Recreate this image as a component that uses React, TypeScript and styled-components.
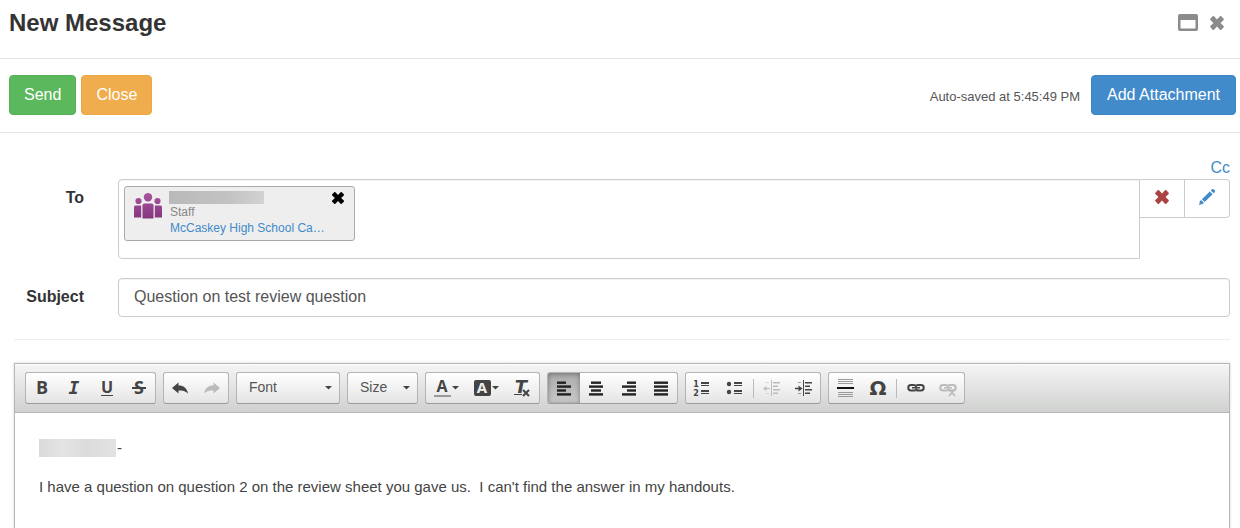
import React from "react";
import styled, { createGlobalStyle, css } from "styled-components";

const GlobalStyle = createGlobalStyle`
  *, *::before, *::after { box-sizing: border-box; }
  body {
    margin: 0;
    background: #fff;
    color: #333;
    font: 16px/20px "Liberation Sans", Arial, sans-serif;
  }
  button, input, select { font: inherit; color: inherit; margin: 0; }
  button { cursor: pointer; }
  svg { display: block; flex: none; overflow: visible; }
`;

const Page = styled.main`
  display: flex;
  flex-direction: column;
  min-height: 100vh;
`;

const Header = styled.header`
  display: flex;
  align-items: center;
  justify-content: space-between;
  height: 59px;
  padding: 0 15px 12px 9px;
  border-bottom: 1px solid #e5e5e5;
`;

const Title = styled.h1`
  margin: 0;
  font-size: 24px;
  line-height: 28px;
  font-weight: bold;
`;

const WindowControls = styled.div`
  display: flex;
  align-items: center;
  gap: 11px;
  color: #8b8b8b;
`;

const IconButton = styled.button`
  display: flex;
  align-items: center;
  justify-content: center;
  padding: 0;
  border: 0;
  background: none;
`;

const ActionBar = styled.div`
  display: flex;
  align-items: center;
  gap: 5px;
  height: 74px;
  padding: 0 4px 2px 9px;
  border-bottom: 1px solid #e5e5e5;
`;

const tones = {
  success: ["#5cb85c", "#55b055"],
  warning: ["#f0ad4e", "#eda747"],
  primary: ["#428bca", "#3d86c6"],
};

const ActionButton = styled.button<{ $tone: keyof typeof tones }>`
  height: 40px;
  padding: 0 ${(p) => (p.$tone === "primary" ? 15 : 14)}px;
  border: 1px solid ${(p) => tones[p.$tone][1]};
  border-radius: 4px;
  background: ${(p) => tones[p.$tone][0]};
  color: #fff;
`;

const SaveStatus = styled.span`
  margin: 4px 6px 0 auto;
  font-size: 13px;
  color: #555;
`;

const Form = styled.form`
  display: flex;
  flex-direction: column;
  flex: 1;
  padding: 25px 10px 0 14px;
`;

const CcLink = styled.a`
  align-self: flex-end;
  height: 21px;
  color: #428bca;
  text-decoration: none;
`;

const Field = styled.div`
  display: flex;
  align-items: flex-start;
  gap: 34px;
  margin-bottom: 19px;
`;

const Label = styled.label`
  flex: none;
  width: 70px;
  padding-top: 9px;
  text-align: right;
  font-weight: bold;
`;

const InputGroup = styled.div`
  display: flex;
  align-items: flex-start;
  flex: 1;
  min-width: 0;
`;

const Recipients = styled.div`
  display: flex;
  align-items: flex-start;
  flex: 1;
  min-width: 0;
  height: 80px;
  padding: 6px 5px;
  border: 1px solid #ccc;
  border-radius: 4px 0 0 4px;
  box-shadow: inset 0 1px 1px rgba(0, 0, 0, 0.05);
`;

const AddonButton = styled(IconButton)<{ $color: string }>`
  width: 45px;
  height: 39px;
  padding-bottom: 3px;
  border: 1px solid #ccc;
  border-left: 0;
  color: ${(p) => p.$color};

  &:last-child { border-radius: 0 4px 4px 0; }
`;

const Chip = styled.div`
  display: flex;
  align-items: flex-start;
  width: 231px;
  height: 55px;
  padding: 4px 9px;
  border: 1px solid #aaa;
  border-radius: 3px;
  background: #eee;
  font-size: 12px;
  line-height: 16px;
`;

const ChipRemove = styled(IconButton)`
  color: #000;
`;

const ChipText = styled.div`
  flex: 1;
  min-width: 0;
  margin-left: 7px;
`;

const ChipName = styled.div`
  width: 95px;
  height: 13px;
  background: linear-gradient(90deg, #b9b9b9, #c0c0c0 45%, #c3c3c3 65%, #d2d2d2);
`;

const ChipRole = styled.div`
  padding-left: 1px;
  color: #888;
`;

const ChipSchool = styled.a`
  display: block;
  padding-left: 1px;
  color: #428bca;
  text-decoration: none;
  white-space: nowrap;
`;

const SubjectInput = styled.input`
  flex: 1;
  min-width: 0;
  height: 39px;
  padding: 0 15px 2px;
  border: 1px solid #ccc;
  border-radius: 4px;
  box-shadow: inset 0 1px 1px rgba(0, 0, 0, 0.05);
  color: #555;
  outline: 0;
`;

const Divider = styled.hr`
  width: 100%;
  margin: 3px 0 23px;
  border: 0;
  border-top: 1px solid #eee;
`;

const Editor = styled.section`
  display: flex;
  flex-direction: column;
  flex: 1;
  border: 1px solid #b6b6b6;
  border-bottom: 0;
  box-shadow: 0 0 3px rgba(0, 0, 0, 0.15);
`;

const Toolbar = styled.div`
  display: flex;
  flex-wrap: wrap;
  gap: 7px;
  padding: 8px 10px;
  border-bottom: 1px solid #b6b6b6;
  background: linear-gradient(#f5f5f5, #cfd1cf);
  box-shadow: inset 0 1px 0 #fff;
`;

const Group = styled.div<{ $width: number }>`
  display: flex;
  align-items: stretch;
  position: relative;
  width: ${(p) => p.$width}px;
  height: 32px;
  border: 1px solid #b4b4b4;
  border-bottom-color: #999;
  border-radius: 3px;
  background: linear-gradient(#fff, #e4e4e4);
`;

const Tool = styled.button<{ $active?: boolean; $faded?: boolean }>`
  display: flex;
  align-items: center;
  justify-content: center;
  flex: 1 1 auto;
  padding: 0;
  border: 0;
  background: none;
  color: #444;
  ${(p) => p.$faded && css`color: #bbb;`}
  ${(p) =>
    p.$active &&
    css`
      border-radius: 2px 0 0 2px;
      background: linear-gradient(#aaa, #cacaca);
      box-shadow: inset 0 1px 5px rgba(0, 0, 0, 0.35);
    `}
`;

const Separator = styled.span`
  flex: none;
  width: 1px;
  margin: 6px 3px 5px;
  background: #bbb;
`;

const Combo = styled.select`
  appearance: none;
  flex: 1;
  min-width: 0;
  padding: 0 20px 2px 12px;
  border: 0;
  background: none;
  color: #555;
  font-size: 14px;
  outline: 0;
`;

const ComboCaret = styled.svg`
  position: absolute;
  right: 7px;
  top: 13px;
  pointer-events: none;
`;

const MessageBody = styled.div`
  flex: 1;
  padding: 25px 24px;
  background: #fff;
  font-size: 15px;
  color: #444;
  outline: 0;
`;

const Paragraph = styled.p`
  display: flex;
  align-items: center;
  margin: 0 0 19px;
  white-space: pre-wrap;
`;

const HiddenName = styled.span`
  width: 77px;
  height: 18px;
  margin-right: 1px;
  background: linear-gradient(90deg, #dadada, #e4e4e4 30%, #dcdcdc 60%, #e2e2e2);
`;

const RemoveIcon = ({ size }: { size: number }) => (
  <svg width={size} height={size} viewBox="0 0 14 14" aria-hidden="true">
    <path
      d="M1.2 3.2 3.2 1.2 Q3.8.7 4.4 1.2L7 3.9 9.6 1.2Q10.2.7 10.8 1.2L12.8 3.2Q13.3 3.8 12.8 4.4L10.1 7 12.8 9.6Q13.3 10.2 12.8 10.8L10.8 12.8Q10.2 13.3 9.6 12.8L7 10.1 4.4 12.8Q3.8 13.3 3.2 12.8L1.2 10.8Q.7 10.2 1.2 9.6L3.9 7 1.2 4.4Q.7 3.8 1.2 3.2Z"
      fill="currentColor"
    />
  </svg>
);

const WindowIcon = () => (
  <svg width="20" height="18" viewBox="0 0 20 18" aria-hidden="true">
    <path
      d="M2 0h16a2 2 0 0 1 2 2v13a2 2 0 0 1-2 2H2a2 2 0 0 1-2-2V2a2 2 0 0 1 2-2Zm.5 6v8.500h15V6Z"
      fill="currentColor"
      fillRule="evenodd"
    />
  </svg>
);

const PencilIcon = () => (
  <svg width="18" height="18" viewBox="0 0 18 18" fill="currentColor" aria-hidden="true">
    <path d="M13.200 2Q14.500.4 15.700 1.200L16.800 2.300Q17.600 3.500 16.200 4.800L15.600 5.300 12.700 2.500Z" />
    <path d="M11.800 3.500 14.600 6.200 6.700 13.900 3.900 11.200Z" />
    <path d="M3.100 12 5.900 14.700 4.400 16 1 17 2 13.300Z" />
  </svg>
);

const PeopleIcon = () => (
  <svg width="28" height="27" viewBox="0 0 28 27" aria-hidden="true">
    <defs>
      <linearGradient id="people" x1="0" y1="0" x2="0" y2="27" gradientUnits="userSpaceOnUse">
        <stop offset="0" stopColor="#a855a0" />
        <stop offset="1" stopColor="#83347b" />
      </linearGradient>
    </defs>
    <g fill="url(#people)" transform="translate(0 2)">
      <circle cx="14" cy="4.200" r="4.200" />
      <circle cx="4.500" cy="8" r="3.100" />
      <circle cx="23.500" cy="8" r="3.100" />
      <path d="M8.500 12.500Q8.500 10.500 10.500 10.500H17.500Q19.500 10.500 19.500 12.500V25.500H8.500Z" />
      <path d="M0 14Q0 12.500 1.500 12.500H7.200V24.500H0Z" />
      <path d="M28 14Q28 12.500 26.500 12.500H20.800V24.500H28Z" />
    </g>
  </svg>
);

const Icon = ({ children, width = 20 }: { children: React.ReactNode; width?: number }) => (
  <svg width={width} height="20" viewBox={`0 0 ${width} 20`} fill="currentColor" aria-hidden="true">
    {children}
  </svg>
);

type GlyphProps = {
  x: number;
  y: number;
  size: number;
  family?: string;
  italic?: boolean;
  fill?: string;
  children: string;
};

const Glyph = ({ x, y, size, family = "Open Sans", italic, fill, children }: GlyphProps) => (
  <text
    x={x}
    y={y}
    fontSize={size}
    fontFamily={`"${family}", sans-serif`}
    fontWeight="bold"
    fontStyle={italic ? "italic" : "normal"}
    textAnchor="middle"
    fill={fill}
  >
    {children}
  </text>
);

const AlignIcon = ({ rows }: { rows: [number, number][] }) => (
  <Icon>
    <g fill="#222">
      {rows.map(([x, w], i) => (
        <rect key={i} x={x} y={3.5 + i * 3.9} width={w} height="2.4" />
      ))}
    </g>
  </Icon>
);

const ReturnArrow = () => (
  <path d="M2 10 8.500 4.500V7.500C13.500 7.500 17 10 18 15.500 15.500 13 12.500 12.500 8.500 12.500V15.500Z" />
);

const IndentLines = () => (
  <>
    <path d="M9 2h1v16h-1z" />
    <path d="M11 4h7v1.500h-7zM11 7.500h5V9h-5zM11 11h7v1.500h-7zM11 14.500h5V16h-5z" />
    <path d="M4 4h3v1H4zM4 15h3v1H4z" opacity=".5" />
  </>
);

const ChainLinks = () => (
  <g fill="none" stroke="currentColor" strokeWidth="2">
    <path d="M9.500 12.500H5A2.750 2.750 0 0 1 5 7H7.500Q10 7 10.300 9" />
    <path d="M10.500 7H15A2.750 2.750 0 0 1 15 12.500H12.500Q10 12.500 9.700 10.500" />
    <path d="M6 9.750h8" strokeWidth="1.500" />
  </g>
);

const Caret = ({ x }: { x: number }) => <path d={`M${x} 8h7l-3.500 3.500z`} />;

const SelectArrow = () => (
  <ComboCaret width="7" height="4" viewBox="0 0 7 4" fill="#444" aria-hidden="true">
    <path d="M0 0h7l-3.500 3.500z" />
  </ComboCaret>
);

export default function App() {
  return (
    <>
      <GlobalStyle />
      <Page>
        <Header>
          <Title>New Message</Title>
          <WindowControls>
            <IconButton aria-label="Maximize"><WindowIcon /></IconButton>
            <IconButton aria-label="Close window"><RemoveIcon size={16} /></IconButton>
          </WindowControls>
        </Header>

        <ActionBar>
          <ActionButton $tone="success">Send</ActionButton>
          <ActionButton $tone="warning">Close</ActionButton>
          <SaveStatus>Auto-saved at 5:45:49 PM</SaveStatus>
          <ActionButton $tone="primary">Add Attachment</ActionButton>
        </ActionBar>

        <Form onSubmit={(e) => e.preventDefault()}>
          <CcLink href="#cc">Cc</CcLink>
          <Field>
            <Label as="span" id="to-label">To</Label>
            <InputGroup>
              <Recipients role="group" aria-labelledby="to-label">
                <Chip>
                  <PeopleIcon />
                  <ChipText>
                    <ChipName />
                    <ChipRole>Staff</ChipRole>
                    <ChipSchool href="#school">McCaskey High School Ca…</ChipSchool>
                  </ChipText>
                  <ChipRemove type="button" aria-label="Remove recipient">
                    <RemoveIcon size={14} />
                  </ChipRemove>
                </Chip>
              </Recipients>
              <AddonButton type="button" aria-label="Clear recipients" $color="#a94442">
                <RemoveIcon size={16} />
              </AddonButton>
              <AddonButton type="button" aria-label="Edit recipients" $color="#428bca">
                <PencilIcon />
              </AddonButton>
            </InputGroup>
          </Field>
          <Field>
            <Label htmlFor="subject">Subject</Label>
            <SubjectInput id="subject" type="text" defaultValue="Question on test review question" />
          </Field>
          <Divider />

          <Editor aria-label="Message editor">
            <Toolbar role="toolbar">
              <Group $width={131}>
                <Tool type="button" aria-label="Bold"><Icon><Glyph x={10} y={16} size={18}>B</Glyph></Icon></Tool>
                <Tool type="button" aria-label="Italic"><Icon><Glyph x={10} y={16} size={18} family="DejaVu Sans Mono" italic>I</Glyph></Icon></Tool>
                <Tool type="button" aria-label="Underline">
                  <Icon><Glyph x={10} y={15} size={16}>U</Glyph><rect x="4" y="17" width="12" height="1" /></Icon>
                </Tool>
                <Tool type="button" aria-label="Strikethrough">
                  <Icon><Glyph x={10} y={16} size={18}>S</Glyph><rect x="3" y="9" width="14" height="2" /></Icon>
                </Tool>
              </Group>

              <Group $width={66}>
                <Tool type="button" aria-label="Undo"><Icon><ReturnArrow /></Icon></Tool>
                <Tool type="button" aria-label="Redo" $faded>
                  <Icon><g transform="matrix(-1 0 0 1 20 0)"><ReturnArrow /></g></Icon>
                </Tool>
              </Group>

              <Group $width={104}>
                <Combo aria-label="Font"><option>Font</option></Combo>
                <SelectArrow />
              </Group>
              <Group $width={71}>
                <Combo aria-label="Size"><option>Size</option></Combo>
                <SelectArrow />
              </Group>

              <Group $width={115}>
                <Tool type="button" aria-label="Text color">
                  <Icon width={26}>
                    <Glyph x={9} y={14} size={16}>A</Glyph>
                    <rect x="1" y="17" width="17" height="2" fill="#999" />
                    <Caret x={19} />
                  </Icon>
                </Tool>
                <Tool type="button" aria-label="Background color">
                  <Icon width={26}>
                    <rect x="1" y="2" width="17" height="16" rx="2" />
                    <Glyph x={9} y={15} size={15} fill="#eee">A</Glyph>
                    <Caret x={19} />
                  </Icon>
                </Tool>
                <Tool type="button" aria-label="Remove format">
                  <Icon>
                    <Glyph x={9} y={15} size={18} family="DejaVu Sans" italic>T</Glyph>
                    <rect x="2" y="16" width="8" height="1" />
                    <path d="m11 12 6 6M17 12l-6 6" stroke="currentColor" strokeWidth="2" />
                  </Icon>
                </Tool>
              </Group>

              <Group $width={131}>
                <Tool type="button" aria-label="Align left" aria-pressed="true" $active><AlignIcon rows={[[3, 9], [3, 14], [3, 9], [3, 14]]} /></Tool>
                <Tool type="button" aria-label="Center"><AlignIcon rows={[[5, 10], [3, 14], [5, 10], [3, 14]]} /></Tool>
                <Tool type="button" aria-label="Align right"><AlignIcon rows={[[8, 9], [3, 14], [8, 9], [3, 14]]} /></Tool>
                <Tool type="button" aria-label="Justify"><AlignIcon rows={[[3, 14], [3, 14], [3, 14], [3, 14]]} /></Tool>
              </Group>

              <Group $width={136}>
                <Tool type="button" aria-label="Numbered list">
                  <Icon>
                    <Glyph x={4} y={9} size={8} family="DejaVu Sans">1</Glyph>
                    <Glyph x={4} y={18} size={8} family="DejaVu Sans">2</Glyph>
                    <path d="M9 4h8v2H9zM9 7h8v1H9zM9 12h8v2H9zM9 15h8v1H9z" />
                  </Icon>
                </Tool>
                <Tool type="button" aria-label="Bulleted list">
                  <Icon>
                    <circle cx="5" cy="6" r="2.200" />
                    <circle cx="5" cy="14" r="2.200" />
                    <path d="M10 4h8v2h-8zM10 7h8v1h-8zM10 12h8v2h-8zM10 15h8v1h-8z" />
                  </Icon>
                </Tool>
                <Separator />
                <Tool type="button" aria-label="Decrease indent" $faded>
                  <Icon><IndentLines /><path d="M1 10.500 4.500 8V10H8V11H4.500V13Z" /></Icon>
                </Tool>
                <Tool type="button" aria-label="Increase indent">
                  <Icon><IndentLines /><path d="M8.500 10.500 4.500 7.500V9.700H1V11.300H4.500V13.500Z" /></Icon>
                </Tool>
              </Group>

              <Group $width={137}>
                <Tool type="button" aria-label="Horizontal line">
                  <Icon>
                    <path d="M3 1h15v1H3zM3 3h15v1H3zM3 5h15v1H3zM3 14h15v1H3zM3 16h15v1H3zM3 18h15v1H3z" fill="#999" />
                    <rect x="2" y="9" width="17" height="2" fill="#111" />
                  </Icon>
                </Tool>
                <Tool type="button" aria-label="Special character"><Icon><Glyph x={11} y={17} size={20} family="DejaVu Sans">Ω</Glyph></Icon></Tool>
                <Separator />
                <Tool type="button" aria-label="Link"><Icon><ChainLinks /></Icon></Tool>
                <Tool type="button" aria-label="Unlink" $faded>
                  <Icon><ChainLinks /><path d="m11 11 6 7M17 11l-6 7" stroke="currentColor" strokeWidth="1.800" /></Icon>
                </Tool>
              </Group>
            </Toolbar>

            <MessageBody role="textbox" aria-multiline="true" aria-label="Message" contentEditable suppressContentEditableWarning>
              <Paragraph><HiddenName />-</Paragraph>
              <Paragraph>{"I have a question on question 2 on the review sheet you gave us.  I can't find the answer in my handouts."}</Paragraph>
            </MessageBody>
          </Editor>
        </Form>
      </Page>
    </>
  );
}
